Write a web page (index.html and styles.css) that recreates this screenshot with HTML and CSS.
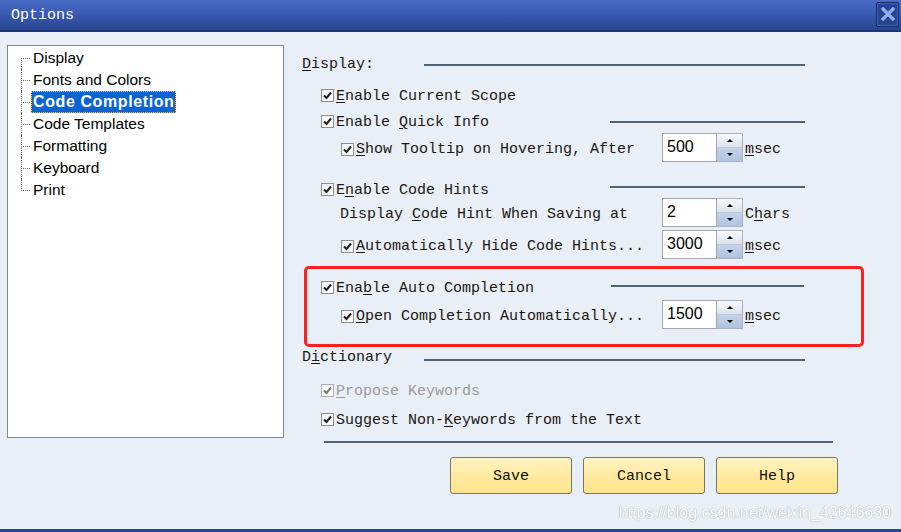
FILE: index.html
```html
<!DOCTYPE html>
<html>
<head>
<meta charset="utf-8">
<title>Options</title>
<link rel="stylesheet" href="styles.css">
</head>
<body>
<div class="window">
  <div class="titlebar">
    <span class="title">Options</span>
    <span class="close">
      <svg width="14" height="14" viewBox="0 0 14 14"><path d="M2 2 L12 12 M12 2 L2 12" stroke="#8eb0f4" stroke-width="3.2" stroke-linecap="square"/></svg>
    </span>
  </div>
  <div class="content">
    <div class="tree">
      <ul class="tree-list">
        <li class="tree-item"><span class="tree-label">Display</span></li>
        <li class="tree-item"><span class="tree-label">Fonts and Colors</span></li>
        <li class="tree-item"><span class="tree-label selected">Code Completion</span></li>
        <li class="tree-item"><span class="tree-label">Code Templates</span></li>
        <li class="tree-item"><span class="tree-label">Formatting</span></li>
        <li class="tree-item"><span class="tree-label">Keyboard</span></li>
        <li class="tree-item last"><span class="tree-label">Print</span></li>
      </ul>
    </div>
    <div class="panel">
      <div class="row head head-display"><span class="txt"><u>D</u>isplay:</span><span class="rule rule-wide rule-down4"></span></div>

      <div class="row r1"><label class="check"><span class="box"><svg width="11" height="11" viewBox="0 0 11 11"><path d="M2 5.5 L4.5 8 L9 2.5" fill="none" stroke="#222" stroke-width="2"/></svg></span><span class="txt"><u>E</u>nable Current Scope</span></label></div>

      <div class="row r2"><label class="check"><span class="box"><svg width="11" height="11" viewBox="0 0 11 11"><path d="M2 5.5 L4.5 8 L9 2.5" fill="none" stroke="#222" stroke-width="2"/></svg></span><span class="txt">Enable <u>Q</u>uick Info</span></label><span class="rule rule-short rule-down2"></span></div>

      <div class="row spinrow r3"><label class="check sub lab"><span class="box"><svg width="11" height="11" viewBox="0 0 11 11"><path d="M2 5.5 L4.5 8 L9 2.5" fill="none" stroke="#222" stroke-width="2"/></svg></span><span class="txt"><u>S</u>how Tooltip on Hovering, After</span></label>
        <span class="spin"><span class="spin-input">500</span><span class="spin-btns"><span class="spin-up"><i class="tri-up"></i></span><span class="spin-down"><i class="tri-down"></i></span></span></span><span class="unit"><u>m</u>sec</span></div>

      <div class="row r4"><label class="check"><span class="box"><svg width="11" height="11" viewBox="0 0 11 11"><path d="M2 5.5 L4.5 8 L9 2.5" fill="none" stroke="#222" stroke-width="2"/></svg></span><span class="txt">E<u>n</u>able Code Hints</span></label><span class="rule rule-short rule-up2"></span></div>

      <div class="row spinrow r5"><span class="lab plain">Display <u>C</u>ode Hint When Saving at</span>
        <span class="spin"><span class="spin-input">2</span><span class="spin-btns"><span class="spin-up"><i class="tri-up"></i></span><span class="spin-down"><i class="tri-down"></i></span></span></span><span class="unit">C<u>h</u>ars</span></div>

      <div class="row spinrow r6"><label class="check sub lab"><span class="box"><svg width="11" height="11" viewBox="0 0 11 11"><path d="M2 5.5 L4.5 8 L9 2.5" fill="none" stroke="#222" stroke-width="2"/></svg></span><span class="txt"><u>A</u>utomatically Hide Code Hints...</span></label>
        <span class="spin"><span class="spin-input">3000</span><span class="spin-btns"><span class="spin-up"><i class="tri-up"></i></span><span class="spin-down"><i class="tri-down"></i></span></span></span><span class="unit"><u>m</u>sec</span></div>

      <div class="highlight">
        <div class="row r7"><label class="check"><span class="box"><svg width="11" height="11" viewBox="0 0 11 11"><path d="M2 5.5 L4.5 8 L9 2.5" fill="none" stroke="#222" stroke-width="2"/></svg></span><span class="txt">Ena<u>b</u>le Auto Completion</span></label><span class="rule rule-short rule-up1"></span></div>
        <div class="row spinrow r8"><label class="check sub lab"><span class="box"><svg width="11" height="11" viewBox="0 0 11 11"><path d="M2 5.5 L4.5 8 L9 2.5" fill="none" stroke="#222" stroke-width="2"/></svg></span><span class="txt"><u>O</u>pen Completion Automatically...</span></label>
          <span class="spin"><span class="spin-input">1500</span><span class="spin-btns"><span class="spin-up"><i class="tri-up"></i></span><span class="spin-down"><i class="tri-down"></i></span></span></span><span class="unit"><u>m</u>sec</span></div>
      </div>

      <div class="row head head-dict"><span class="txt">D<u>i</u>ctionary</span><span class="rule rule-wide rule-down8"></span></div>

      <div class="row r9 disabled"><label class="check"><span class="box"><svg width="11" height="11" viewBox="0 0 11 11"><path d="M2 5.5 L4.5 8 L9 2.5" fill="none" stroke="#777" stroke-width="2"/></svg></span><span class="txt"><u>P</u>ropose Keywords</span></label></div>

      <div class="row r10"><label class="check"><span class="box"><svg width="11" height="11" viewBox="0 0 11 11"><path d="M2 5.5 L4.5 8 L9 2.5" fill="none" stroke="#222" stroke-width="2"/></svg></span><span class="txt">Suggest Non-<u>K</u>eywords from the Text</span></label></div>

      <div class="footer-rule"></div>

      <div class="buttons">
        <button class="btn">Save</button>
        <button class="btn">Cancel</button>
        <button class="btn">Help</button>
      </div>
    </div>
  </div>
  <div class="watermark">https://blog.csdn.net/weixin_42646630</div>
</div>
</body>
</html>
```

FILE: styles.css
```css
* { box-sizing: border-box; }
html, body { margin: 0; padding: 0; }
body {
  width: 901px;
  height: 532px;
  overflow: hidden;
  background: #e9eff7;
}
.window {
  position: relative;
  width: 901px;
  height: 532px;
  display: flex;
  flex-direction: column;
  background: #e9eff7;
  border-bottom: 3px solid #2c4a86;
}
.titlebar {
  height: 32px;
  flex: none;
  display: flex;
  align-items: center;
  justify-content: space-between;
  padding: 0 2px 0 11px;
  background: linear-gradient(to bottom, #4b6cc6 0%, #3b5db6 40%, #2d4c9c 80%, #27448e 100%);
  border-bottom: 2px solid #1d3673;
}
.title {
  font-family: "Liberation Mono", monospace;
  font-size: 15px;
  color: #ffffff;
  margin-top: 0;
}
.close {
  width: 23px;
  height: 25px;
  display: flex;
  align-items: center;
  justify-content: center;
  background: #2a458e;
  border: 1px solid #172c62;
  box-shadow: inset 0 0 0 1px #4665b0;
  border-radius: 2px;
  margin-top: -2px;
}
.content {
  flex: 1;
  display: flex;
}
.tree {
  flex: none;
  width: 277px;
  height: 393px;
  margin: 13px 0 0 7px;
  background: #ffffff;
  border: 1px solid #80898f;
}
.tree-list {
  list-style: none;
  margin: 0;
  padding: 1px 0 0 23px;
  font-family: "Liberation Sans", Arial, sans-serif;
  font-size: 15.5px;
  color: #000;
}
.tree-item {
  position: relative;
  height: 22px;
  display: flex;
  align-items: center;
}
.tree-item::before {
  content: "";
  position: absolute;
  left: -10px;
  top: 11px;
  width: 9px;
  border-top: 1px dotted #6a6a6a;
}
.tree-item::after {
  content: "";
  position: absolute;
  left: -10px;
  top: 0;
  height: 22px;
  border-left: 1px dotted #6a6a6a;
}
.tree-item:first-child::after { top: 11px; height: 11px; }
.tree-item.last::after { height: 12px; }
.tree-label {
  padding: 0 2px;
  line-height: 22px;
  height: 22px;
}
.tree-label.selected {
  background: #0b64cf;
  color: #ffffff;
  font-weight: bold;
  font-size: 16px;
  letter-spacing: 0.6px;
  outline: 1px dotted #f0c060;
  outline-offset: -1px;
}
.panel {
  flex: 1;
  display: flex;
  flex-direction: column;
  padding: 22px 0 0 18px;
  font-family: "Liberation Mono", "Courier New", monospace;
  font-size: 15px;
  color: #1c1610;
}
.row {
  width: 503px;
  display: flex;
  align-items: center;
  height: 18px;
  white-space: pre;
}
.row u { text-decoration: underline; text-underline-offset: 2px; }
.txt { padding-top: 2px; }
.spinrow { height: 29px; }
.head-display { margin-top: 0; }
.r1 { margin-top: 14px; padding-left: 19px; }
.r2 { margin-top: 8px; padding-left: 19px; }
.r3 { margin-top: 3px; padding-left: 39px; }
.r4 { margin-top: 18px; padding-left: 19px; }
.r5 { margin-top: 0; padding-left: 38px; }
.r6 { margin-top: 3px; padding-left: 39px; }
.r9 { margin-top: 16px; padding-left: 19px; }
.r10 { margin-top: 11px; padding-left: 19px; }
.check {
  display: flex;
  align-items: center;
}
.box {
  width: 13px;
  height: 13px;
  margin-right: 2px;
  border: 1px solid #8e8f8f;
  background: linear-gradient(135deg, #f2f2f2, #ffffff);
  display: flex;
  align-items: center;
  justify-content: center;
  flex: none;
}
.lab { width: 321px; flex: none; padding-top: 3px; }
.lab .txt { padding-top: 0; }
.plain { width: 322px; }
.disabled { color: #9b9b9b; }
.disabled .box { border-color: #b0b0b0; }
.rule {
  height: 2px;
  background: #4d6272;
  margin-left: auto;
  flex: none;
}
.rule-wide { width: 381px; }
.rule-short { width: 195px; }
.rule-down4 { margin-top: 4px; }
.rule-down2 { margin-top: 2px; }
.rule-down8 { margin-top: 8px; }
.rule-up2 { margin-top: -4px; }
.rule-up1 { margin-top: -2px; width: 193px; }
.spin {
  display: flex;
  height: 29px;
  flex: none;
}
.spin-input {
  width: 55px;
  height: 29px;
  background: #fff;
  border: 1px solid #a2a7ad;
  font-family: "Liberation Sans", Arial, sans-serif;
  font-size: 16px;
  color: #000;
  padding: 4px 0 0 4px;
  line-height: 18px;
}
.spin-btns {
  width: 26px;
  height: 29px;
  display: flex;
  flex-direction: column;
  border: 1px solid #a9b2be;
  border-left: none;
}
.spin-up, .spin-down {
  flex: 1;
  display: flex;
  align-items: center;
  justify-content: center;
}
.spin-up {
  background: linear-gradient(to bottom, #f8f9fc, #dbe3ee);
  border-bottom: 1px solid #c0c9d6;
}
.spin-down {
  background: linear-gradient(to bottom, #c3d3ea, #afc3df);
}
.tri-up, .tri-down {
  display: block;
  width: 0;
  height: 0;
  border-left: 3px solid transparent;
  border-right: 3px solid transparent;
}
.tri-up { border-bottom: 3px solid #000; }
.tri-down { border-top: 3px solid #000; }
.unit { margin-left: 2px; padding-top: 3px; }
.highlight {
  margin-top: 7px;
  margin-left: 2px;
  width: 560px;
  border: 3px solid #ff1f1f;
  border-radius: 5px;
  padding: 9px 0 15px 14px;
}
.r7 { width: 541px; padding-right: 58px; }
.r7 .rule { width: 193px; }
.r8 { margin-top: 4px; padding-left: 20px; }
.head-dict { margin-top: 0; }
.footer-rule {
  margin-top: 13px;
  margin-left: 22px;
  width: 509px;
  height: 2px;
  background: #4d6272;
}
.buttons {
  margin-top: 14px;
  margin-left: 148px;
  display: flex;
  gap: 11px;
}
.btn {
  width: 122px;
  height: 37px;
  border: 1px solid #7b7563;
  border-radius: 3px;
  background: linear-gradient(to bottom, #fff4c4 0%, #ffeaa0 50%, #ffe58e 100%);
  font-family: "Liberation Mono", "Courier New", monospace;
  font-size: 15px;
  color: #111;
  padding: 2px 0 0;
}
.watermark {
  position: absolute;
  right: 10px;
  bottom: 7px;
  font-family: "Liberation Sans", Arial, sans-serif;
  font-size: 16px;
  color: #ffffff;
  text-shadow: 0 0 1px #a8b0b8, 0 0 1px #a8b0b8;
}
```
